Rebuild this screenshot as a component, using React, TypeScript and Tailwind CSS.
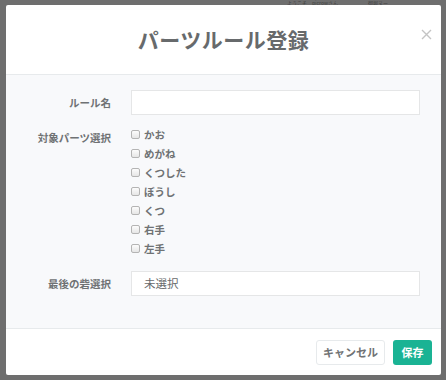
import React from "react";

const parts = ["かお", "めがね", "くつした", "ぼうし", "くつ", "右手", "左手"];

export default function App() {
  return (
    <div
      className="w-[446px] h-[380px] bg-[#6e6e6e] overflow-hidden flex flex-col"
      style={{ fontFamily: '"Noto Sans CJK JP", "Noto Sans", sans-serif' }}
    >
      <div className="h-[5px] pl-[287px] text-[5px] leading-[5px] text-[#444] whitespace-nowrap">
        ようこそ　picrowさん　　　　　　御堀ヌー
      </div>
      <div className="ml-[6px] w-[435px] h-[370px] bg-white flex flex-col rounded-[2px] relative">
        <div className="h-[70px] flex items-center justify-center border-b border-[#e7eaec] relative">
          <span className="text-[21px] font-bold text-[#676a6c] tracking-[0.5px]">パーツルール登録</span>
          <svg className="absolute right-[9px] top-[24px]" width="11" height="11" viewBox="0 0 11 11">
            <path d="M1 1L10 10M10 1L1 10" stroke="#c4c4c4" strokeWidth="1.4" />
          </svg>
        </div>
        <div className="flex-1 bg-[#f8f9fb] flex flex-col pt-[15px] pr-[21px]">
          <div className="flex items-center h-[25px]">
            <div className="w-[105px] text-right text-[10.5px] font-bold text-[#6f7274]">ルール名</div>
            <div className="ml-[20px] flex-1 h-[25px] bg-white border border-[#e5e6e7]" />
          </div>
          <div className="flex mt-[10px]">
            <div className="w-[105px] text-right text-[10.5px] font-bold text-[#6f7274] leading-[19px] mt-[3px]">対象パーツ選択</div>
            <div className="ml-[20px] flex flex-col">
              {parts.map((p) => (
                <div key={p} className="flex items-center h-[19px]">
                  <span className="w-[9px] h-[9px] border border-[#b4b4b4] rounded-[2px] bg-gradient-to-b from-[#fcfcfc] to-[#e6e6e6]" />
                  <span className="ml-[4px] text-[10.5px] font-bold text-[#6f7274]">{p}</span>
                </div>
              ))}
            </div>
          </div>
          <div className="flex items-center h-[25px] mt-[13px]">
            <div className="w-[105px] text-right text-[10.5px] font-bold text-[#6f7274]">最後の砦選択</div>
            <div className="ml-[20px] flex-1 h-[25px] bg-white border border-[#e5e6e7] flex items-center pl-[12px] text-[11.5px] text-[#676a6c]">
              未選択
            </div>
          </div>
        </div>
        <div className="h-[47px] border-t border-[#e7eaec] flex items-center justify-end pr-[9px] gap-[8px]">
          <div className="h-[25px] w-[69px] border border-[#e7eaec] bg-white rounded-[3px] flex items-center justify-center text-[11px] font-bold text-[#6f7274]">
            キャンセル
          </div>
          <div className="h-[25px] w-[39px] bg-[#1ab394] rounded-[3px] flex items-center justify-center text-[11px] font-bold text-white">
            保存
          </div>
        </div>
      </div>
    </div>
  );
}
